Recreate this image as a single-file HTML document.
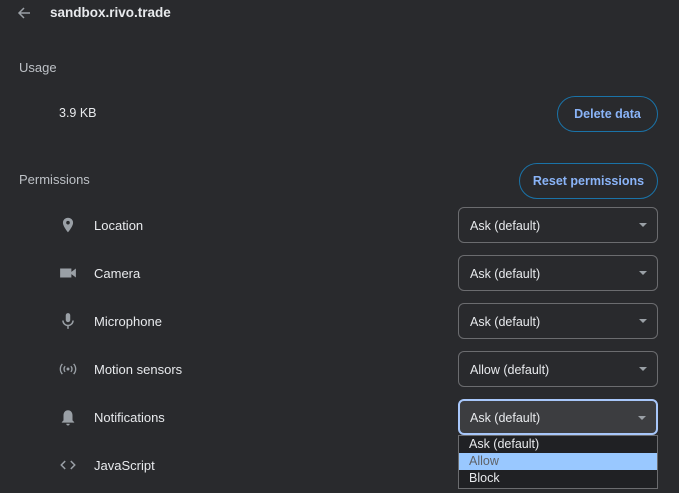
<!DOCTYPE html>
<html><head><style>
body{margin:0;width:679px;height:493px;background:#292a2d;font-family:"Liberation Sans",sans-serif;color:#e8eaed;position:relative;overflow:hidden;font-size:13px}
.a{position:absolute}
.btn{position:absolute;border:1px solid #1a73a8;border-radius:18px;color:#8ab4f8;font-weight:bold;font-size:12.5px;text-align:center;box-sizing:border-box;height:36px;line-height:35px}
.sel{position:absolute;left:458px;width:200px;height:36px;box-sizing:border-box;border:1px solid #6b6c6f;border-radius:6px;font-size:12.5px;line-height:36px;padding-left:11px;color:#e8eaed}
.sel:after{content:"";position:absolute;right:10px;top:15px;border-left:4px solid transparent;border-right:4px solid transparent;border-top:4px solid #9aa0a6}
.lbl{position:absolute;left:94px;font-size:13px}
.ic{position:absolute;left:59px;width:18px;height:18px}
</style></head><body>
<svg class="a" style="left:16px;top:5px" width="16" height="16" viewBox="0 0 16 16"><path d="M14 8H3M8 3L3 8l5 5" stroke="#9aa0a6" stroke-width="1.5" fill="none"/></svg>
<div class="a" style="left:50px;top:5px;font-weight:bold;font-size:13.5px">sandbox.rivo.trade</div>
<div class="a" style="left:19px;top:60px;color:#bdc1c6">Usage</div>
<div class="a" style="left:59px;top:106px;font-size:12.5px">3.9 KB</div>
<div class="btn" style="left:557px;top:96px;width:101px">Delete data</div>
<div class="a" style="left:19px;top:172px;color:#bdc1c6">Permissions</div>
<div class="btn" style="left:519px;top:163px;width:139px">Reset permissions</div>

<svg class="ic" style="top:216px" viewBox="0 0 16 16"><path d="M8 1.5a4.5 4.5 0 0 0-4.5 4.5c0 3.2 4.5 8.5 4.5 8.5s4.5-5.3 4.5-8.5A4.5 4.5 0 0 0 8 1.5zm0 6a1.6 1.6 0 1 1 0-3.2 1.6 1.6 0 0 1 0 3.2z" fill="#9aa0a6"/></svg>
<div class="lbl" style="top:218px">Location</div>
<svg class="ic" style="top:264px" viewBox="0 0 16 16"><path d="M1 4h10v8H1zM11 7l4-3v8l-4-3z" fill="#9aa0a6"/></svg>
<div class="lbl" style="top:266px">Camera</div>
<svg class="ic" style="top:312px" viewBox="0 0 16 16"><rect x="6" y="1" width="4" height="8" rx="2" fill="#9aa0a6"/><path d="M3.5 7.5a4.5 4.5 0 0 0 9 0M8 12v3" stroke="#9aa0a6" stroke-width="1.3" fill="none"/></svg>
<div class="lbl" style="top:314px">Microphone</div>
<svg class="ic" style="top:360px" viewBox="0 0 16 16"><circle cx="8" cy="8" r="1.3" fill="#9aa0a6"/><path d="M5.5 5.5a3.5 3.5 0 0 0 0 5M10.5 5.5a3.5 3.5 0 0 1 0 5M3 3.5a6.5 6.5 0 0 0 0 9M13 3.5a6.5 6.5 0 0 1 0 9" stroke="#9aa0a6" stroke-width="1.2" fill="none"/></svg>
<div class="lbl" style="top:362px">Motion sensors</div>
<svg class="ic" style="top:408px" viewBox="0 0 16 16"><path d="M8 2c-2.5 0-4 2-4 4.5V11l-1.5 1.5v.5h11v-.5L12 11V6.5C12 4 10.5 2 8 2zM6.5 14h3a1.5 1.5 0 0 1-3 0z" fill="#9aa0a6"/></svg>
<div class="lbl" style="top:410px">Notifications</div>
<svg class="ic" style="top:456px" viewBox="0 0 16 16"><path d="M5.5 4.5L2 8l3.5 3.5M10.5 4.5L14 8l-3.5 3.5" stroke="#9aa0a6" stroke-width="1.3" fill="none"/></svg>
<div class="lbl" style="top:458px">JavaScript</div>

<div class="sel" style="top:207px">Ask (default)</div>
<div class="sel" style="top:255px">Ask (default)</div>
<div class="sel" style="top:303px">Ask (default)</div>
<div class="sel" style="top:351px">Allow (default)</div>
<div class="sel" style="top:399px;border:2px solid #a8c7fa;background:#3c3d40;padding-left:10px;line-height:34px">Ask (default)</div>
<div class="a" style="left:458px;top:435px;width:198px;height:52px;border:1px solid #6b6c6f;background:#202124;font-size:12.5px;line-height:17px">
<div style="padding-left:10px">Ask (default)</div>
<div style="padding-left:10px;background:#99c8ff;color:#5f6368">Allow</div>
<div style="padding-left:10px">Block</div>
</div>
</body></html>
